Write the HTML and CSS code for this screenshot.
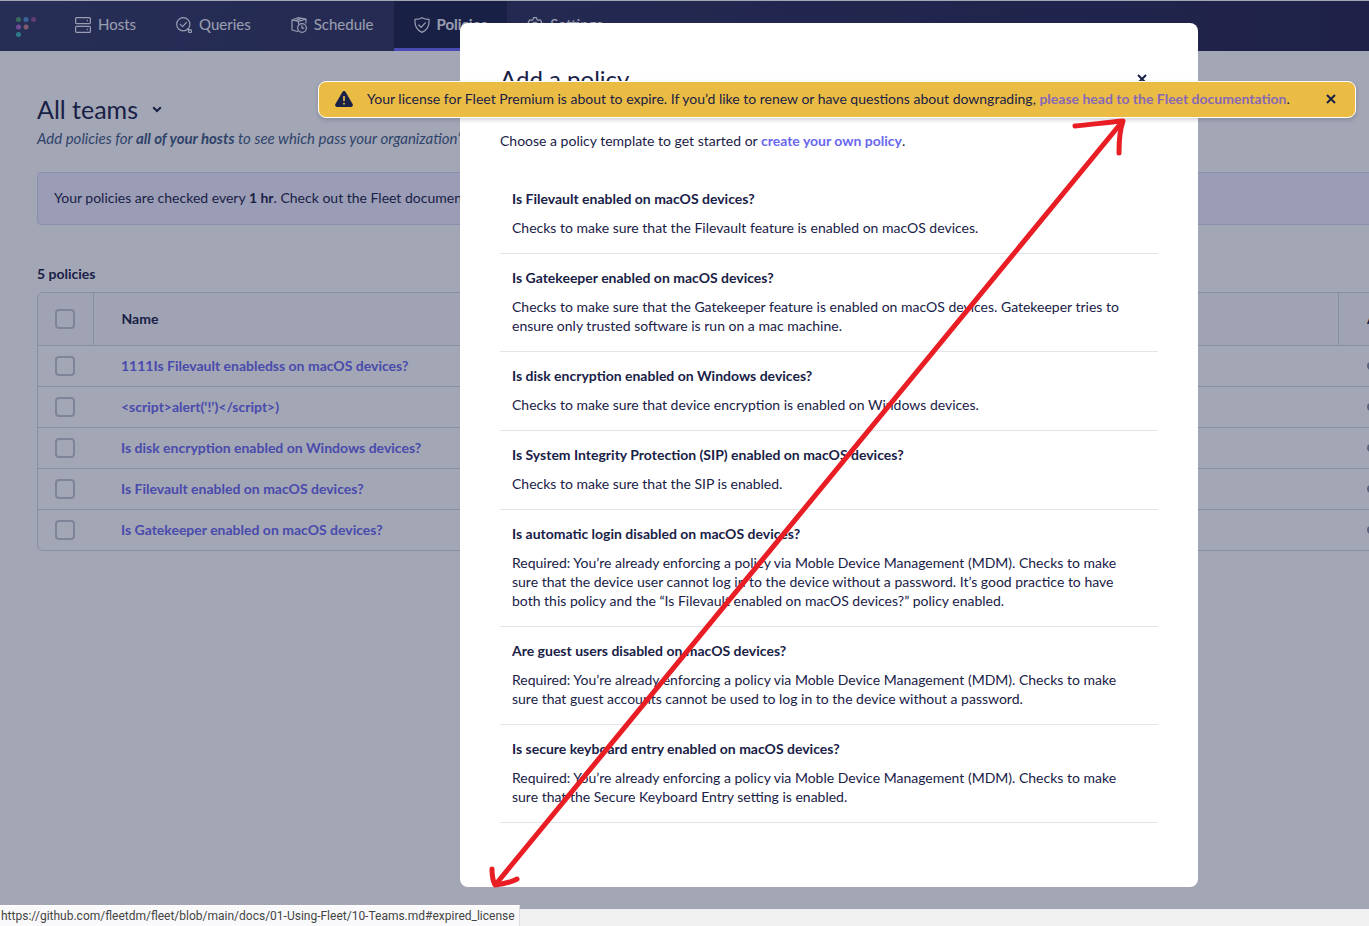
FILE: index.html
```html
<!DOCTYPE html>
<html lang="en">
<head>
    <meta charset="UTF-8">
    <title>Policies | Fleet</title>
    <link rel="stylesheet" href="styles.css">
</head>
<body>
    <div class="app">
        <nav class="navbar">
            <a href="#" class="logo" aria-label="Fleet">
                <svg width="21" height="21" viewBox="0 0 21 21">
                    <circle cx="2.500" cy="2.500" r="2.500" fill="#4f9f6c"/>
                    <circle cx="10" cy="2.500" r="2.500" fill="#5090cf"/>
                    <circle cx="17.500" cy="2.500" r="2.500" fill="#8f5090"/>
                    <circle cx="2.500" cy="10" r="2.500" fill="#a968cf"/>
                    <circle cx="10" cy="10" r="2.500" fill="#c47f88"/>
                    <circle cx="2.500" cy="17.500" r="2.500" fill="#3ab4b8"/>
                </svg>
            </a>
            <a href="#" class="nav-item">
                <svg class="icon" viewBox="0 0 16 16"><rect x=".6" y=".6" width="14.800" height="6" rx="1"/><rect x=".6" y="9.400" width="14.800" height="6" rx="1"/><path d="M12.300 3.400v.4M12.300 12.200v.4"/></svg>
                Hosts
            </a>
            <a href="#" class="nav-item">
                <svg class="icon" viewBox="0 0 16 16"><circle cx="7.300" cy="7.300" r="6.600"/><path d="M4.300 7.400l2.200 2.200 4-4.200M11.800 12l1.200 1.200"/><circle cx="14" cy="14.200" r="1.500"/></svg>
                Queries
            </a>
            <a href="#" class="nav-item">
                <svg class="icon" viewBox="0 0 16 16"><path d="M6.500 14.500L1 13V3l6-2.300L15 2v4M1 3l6.500 1.400L15 2M7.500 4.400v2.600M4.500 3.600L11 1.300"/><circle cx="11" cy="11" r="4.400"/><path d="M11 8.700V11.200h1.800"/></svg>
                Schedule
            </a>
            <a href="#" class="nav-item active">
                <svg class="icon" viewBox="0 0 16 16"><path d="M8 .7c2 1.300 4.400 1.700 7 1.700.5 6-1.500 10.600-7 13C2.500 13 .5 8.400 1 2.400c2.600 0 5-.4 7-1.700z"/><path d="M4.800 8l2.300 2.300 4.200-4.400"/></svg>
                Policies
            </a>
            <a href="#" class="nav-item">
                <svg class="icon" viewBox="0 0 16 16"><path d="M6.500.7h3l.5 2 1.300.7 2-.6 1.500 2.600-1.500 1.500v2.200l1.500 1.500-1.500 2.600-2-.6-1.300.7-.5 2h-3l-.5-2-1.300-.7-2 .6-1.500-2.600 1.500-1.500V6.900L1.200 5.400l1.500-2.600 2 .6L6 2.700z"/><circle cx="8" cy="8" r="2.600"/></svg>
                Settings
            </a>
        </nav>

        <main class="page">
            <h1 class="team">
                <button class="team-select">All teams
                    <svg width="10" height="7" viewBox="0 0 10 7"><path d="M1.200 1.200L5 5l3.800-3.800"/></svg>
                </button>
            </h1>
            <p class="subtitle">Add policies for <b>all of your hosts</b> to see which pass your organization’s standards.</p>
            <div class="info">Your policies are checked every <b>1 hr</b>. Check out the Fleet documentation on updating this interval.</div>

            <h2 class="count">5 policies</h2>
            <div class="table-wrap">
                <table class="policies">
                    <thead>
                        <tr>
                            <th class="check"><input type="checkbox" aria-label="Select all"></th>
                            <th class="name">Name</th>
                            <th class="author">Author</th>
                        </tr>
                    </thead>
                    <tbody>
                        <tr>
                            <td class="check"><input type="checkbox" aria-label="Select policy 1"></td>
                            <td class="name"><a href="#">1111Is Filevault enabledss on macOS devices?</a></td>
                            <td class="author"><span class="dot"></span></td>
                        </tr>
                        <tr>
                            <td class="check"><input type="checkbox" aria-label="Select policy 2"></td>
                            <td class="name"><a href="#">&lt;script&gt;alert(‘!’)&lt;/script&gt;)</a></td>
                            <td class="author"><span class="dot"></span></td>
                        </tr>
                        <tr>
                            <td class="check"><input type="checkbox" aria-label="Select policy 3"></td>
                            <td class="name"><a href="#">Is disk encryption enabled on Windows devices?</a></td>
                            <td class="author"><span class="dot"></span></td>
                        </tr>
                        <tr>
                            <td class="check"><input type="checkbox" aria-label="Select policy 4"></td>
                            <td class="name"><a href="#">Is Filevault enabled on macOS devices?</a></td>
                            <td class="author"><span class="dot"></span></td>
                        </tr>
                        <tr>
                            <td class="check"><input type="checkbox" aria-label="Select policy 5"></td>
                            <td class="name"><a href="#">Is Gatekeeper enabled on macOS devices?</a></td>
                            <td class="author"><span class="dot"></span></td>
                        </tr>
                    </tbody>
                </table>
            </div>
        </main>

        <div class="overlay">
            <section class="modal" role="dialog" aria-labelledby="modalTitle">
                <header class="modal-header">
                    <h2 id="modalTitle">Add a policy</h2>
                    <button class="close" aria-label="Close">
                        <svg width="10" height="10" viewBox="0 0 10 10"><path d="M1 1l8 8M9 1L1 9"/></svg>
                    </button>
                </header>
                <p class="modal-intro">Choose a policy template to get started or <a href="#">create your own policy</a>.</p>
                <ul class="templates">
                    <li>
                        <h3>Is Filevault enabled on macOS devices?</h3>
                        <p>Checks to make sure that the Filevault feature is enabled on macOS devices.</p>
                    </li>
                    <li>
                        <h3>Is Gatekeeper enabled on macOS devices?</h3>
                        <p>Checks to make sure that the Gatekeeper feature is enabled on macOS devices. Gatekeeper tries to ensure only trusted software is run on a mac machine.</p>
                    </li>
                    <li>
                        <h3>Is disk encryption enabled on Windows devices?</h3>
                        <p>Checks to make sure that device encryption is enabled on Windows devices.</p>
                    </li>
                    <li>
                        <h3>Is System Integrity Protection (SIP) enabled on macOS devices?</h3>
                        <p>Checks to make sure that the SIP is enabled.</p>
                    </li>
                    <li>
                        <h3>Is automatic login disabled on macOS devices?</h3>
                        <p>Required: You’re already enforcing a policy via Moble Device Management (MDM). Checks to make sure that the device user cannot log in to the device without a password. It’s good practice to have both this policy and the “Is Filevault enabled on macOS devices?” policy enabled.</p>
                    </li>
                    <li>
                        <h3>Are guest users disabled on macOS devices?</h3>
                        <p>Required: You’re already enforcing a policy via Moble Device Management (MDM). Checks to make sure that guest accounts cannot be used to log in to the device without a password.</p>
                    </li>
                    <li>
                        <h3>Is secure keyboard entry enabled on macOS devices?</h3>
                        <p>Required: You’re already enforcing a policy via Moble Device Management (MDM). Checks to make sure that the Secure Keyboard Entry setting is enabled.</p>
                    </li>
                </ul>
            </section>
        </div>
    </div>

    <div class="flash" role="alert">
        <svg class="warning" width="18" height="16" viewBox="0 0 18 16"><path d="M7.400 1a1.900 1.900 0 0 1 3.200 0l7 12a2 2 0 0 1-1.700 3H2.100a2 2 0 0 1-1.700-3z" fill="#192147"/><path d="M9 5v5M9 11.700v1.700" stroke="#ebbc43" stroke-width="1.700"/></svg>
        <span class="flash-text">Your license for Fleet Premium is about to expire. If you’d like to renew or have questions about downgrading, <a href="#">please head to the Fleet documentation</a>.</span>
        <button class="close" aria-label="Dismiss">
            <svg width="10" height="10" viewBox="0 0 10 10"><path d="M1 1l8 8M9 1L1 9"/></svg>
        </button>
    </div>

    <!-- hand drawn arrow between banner link and status bar -->
    <svg class="arrow" width="1369" height="926" viewBox="0 0 1369 926">
        <path d="M496 884L1122 122"/>
        <path d="M1075 126c14-1 33-4 48-5-3 8-4 18-4 32"/>
        <path d="M492 869c0 7 1 12 3 16 8-1 15-2 22-6"/>
    </svg>

    <footer class="scrollbar"></footer>
    <div class="status">https://github.com/fleetdm/fleet/blob/main/docs/01-Using-Fleet/10-Teams.md#expired_license</div>
</body>
</html>
```
FILE: styles.css
```css
:root {
    --fleet-black: #192147;
    --vibrant-blue: #6a67fe;
    --border-color: #e2e4ea;
    --table-border: #d4d7e2;
}

* {
    margin: 0;
    padding: 0;
    box-sizing: border-box;
}

html, body {
    height: 100%;
}

body {
    font-family: "Lato", "Open Sans", sans-serif;
    font-size: 14px;
    line-height: 19px;
    color: var(--fleet-black);
    background-color: #fff;
    overflow: hidden;
}

a {
    color: #6a67f0;
    font-weight: bold;
    text-decoration: none;
}

button {
    font: inherit;
    color: inherit;
    background: none;
    border: none;
    cursor: pointer;
}

svg {
    fill: none;
    flex: none;
}

.app {
    min-width: 1658px;
    min-height: 100%;
    border-top: 1px solid #fff;
}

/* Navigation */
.navbar {
    display: flex;
    height: 50px;
    background: linear-gradient(to right, #303862, #211d46);
}

.logo {
    display: flex;
    width: 55px;
    padding: 16px 0 0 16px;
}

.nav-item {
    display: flex;
    align-items: center;
    gap: 7px;
    padding: 0 20px 3px;
    font-size: 15px;
    font-weight: normal;
    color: #f0f1f8;
}

.nav-item.active {
    font-weight: bold;
    background-color: #192147;
    border-bottom: 3px solid var(--vibrant-blue);
    padding-bottom: 0;
}

.icon {
    width: 16px;
    height: 16px;
    stroke: #f0f1f8;
    stroke-width: 1.2;
    stroke-linecap: round;
    stroke-linejoin: round;
}

/* Page */
.page {
    padding: 42px 37px;
}

.team {
    font-size: 25px;
    font-weight: normal;
    line-height: 32px;
}

.team-select {
    display: flex;
    align-items: center;
    gap: 14px;
}

.team-select svg {
    stroke: var(--fleet-black);
    stroke-width: 2;
}

.subtitle {
    margin-top: 4px;
    font-size: 15px;
    font-style: italic;
    color: #3e5a83;
}

.info {
    margin-top: 24px;
    padding: 15px 16px 17px;
    background-color: #f1f0ff;
    border: 1px solid #d8d8f4;
    border-radius: 4px;
}

.count {
    margin: 39px 0 9px;
    font-size: 14px;
    line-height: 19px;
}

.table-wrap {
    border: 1px solid var(--table-border);
    border-radius: 6px;
    overflow: hidden;
}

.policies {
    width: 100%;
    border-collapse: collapse;
    table-layout: fixed;
}

.policies th {
    height: 52px;
    text-align: left;
    background-color: #f9fafc;
    border-right: 1px solid var(--table-border);
}

.policies td {
    height: 41px;
    border-top: 1px solid var(--table-border);
}

.policies .check {
    width: 55px;
    padding-left: 17px;
}

.policies .name {
    padding-left: 28px;
}

.policies .author {
    width: 281px;
    padding-left: 28px;
}

.policies input {
    display: block;
    appearance: none;
    width: 20px;
    height: 20px;
    border: 2px solid #c5c7d1;
    border-radius: 4px;
}

.dot {
    display: block;
    width: 8px;
    height: 8px;
    background-color: #8b8fa2;
    border-radius: 50%;
}

/* Modal */
.overlay {
    position: absolute;
    top: 0;
    left: 0;
    min-width: 1658px;
    height: 100%;
    padding-top: 23px;
    background-color: rgba(25, 33, 71, 0.4);
}

.modal {
    max-width: 738px;
    margin: 0 auto;
    padding: 40px 40px 64px;
    background-color: #fff;
    border-radius: 8px;
}

.modal-header {
    display: flex;
    align-items: center;
    justify-content: space-between;
    padding-right: 11px;
}

.modal-header h2 {
    font-size: 24px;
    font-weight: normal;
    line-height: 32px;
}

.close svg {
    display: block;
    stroke: var(--fleet-black);
    stroke-width: 2;
}

.modal-intro {
    margin: 36px 0 25px;
}

.templates {
    list-style: none;
}

.templates li {
    padding: 14px 20px 16px 12px;
    border-bottom: 1px solid var(--border-color);
}

.templates h3 {
    margin-bottom: 10px;
    font-size: 14px;
}

/* License banner */
.flash {
    position: absolute;
    top: 81px;
    left: 318px;
    right: 13px;
    display: flex;
    align-items: center;
    padding: 7px 19px 9px 16px;
    white-space: nowrap;
    background-color: #ebbc43;
    border: 1px solid #fff;
    border-radius: 8px;
    box-shadow: 0 2px 4px rgba(25, 33, 71, 0.2);
}

.flash-text {
    flex: 1;
    margin-left: 14px;
}

.flash a {
    color: #8768b8;
}

.arrow {
    position: absolute;
    top: 0;
    left: 0;
    stroke: #e91e25;
    stroke-width: 5;
    stroke-linecap: round;
    stroke-linejoin: round;
    pointer-events: none;
}

/* Browser bottom edge */
.scrollbar {
    position: absolute;
    bottom: 0;
    left: 0;
    width: 100%;
    height: 17px;
    background-color: #f0f0f0;
}

.status {
    position: absolute;
    bottom: 0;
    left: 0;
    padding: 1px 4px 0 1px;
    font-family: "Roboto", "Open Sans", sans-serif;
    font-size: 12px;
    color: #444;
    background-color: #f9f9fb;
    border-top: 1px solid #fff;
    border-right: 1px solid #ddd;
}
```
